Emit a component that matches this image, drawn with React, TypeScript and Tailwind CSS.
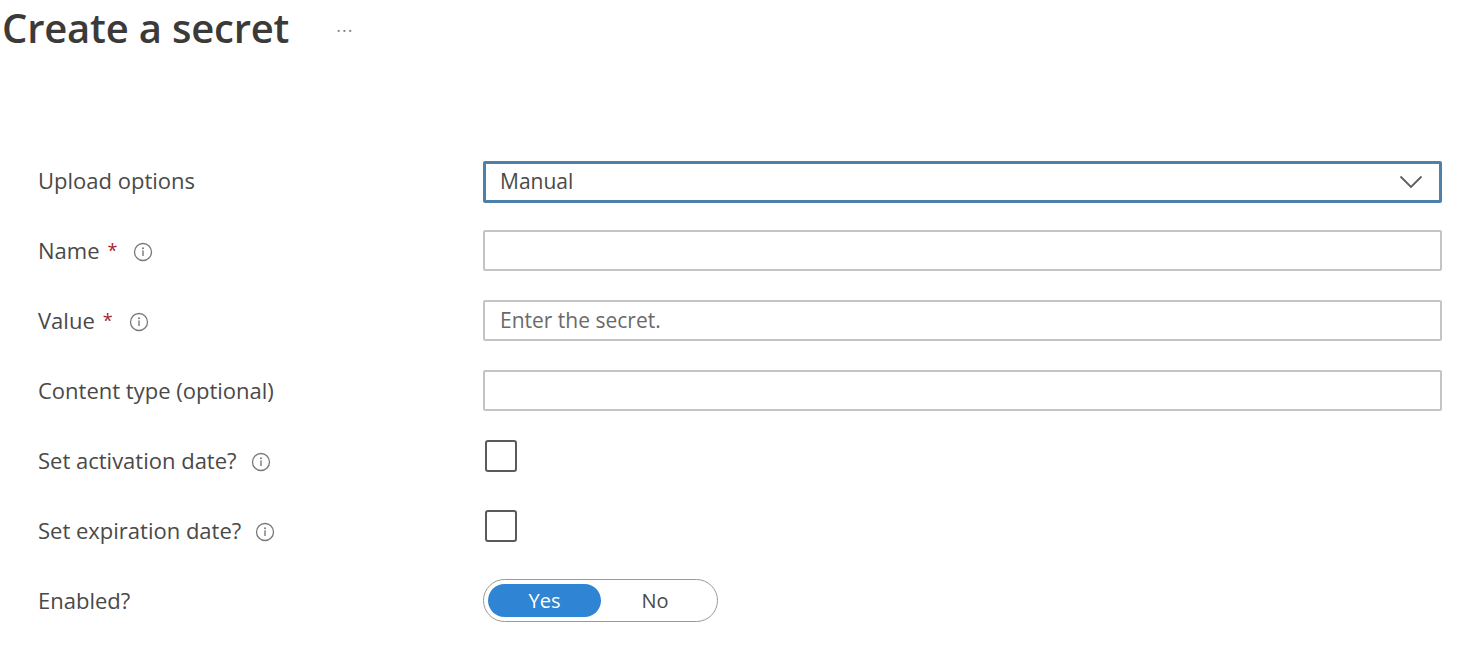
import React from "react";

const font = { fontFamily: '"Open Sans", "Noto Sans", sans-serif' };

const InfoIcon = () => (
    <svg width="20" height="20" viewBox="0 0 20 20" className="shrink-0">
        <circle cx="10" cy="10" r="8.5" fill="none" stroke="#7a7978" strokeWidth="1.3" />
        <circle cx="10" cy="6.3" r="1" fill="#7a7978" />
        <rect x="9.3" y="8.4" width="1.4" height="5.6" fill="#7a7978" />
    </svg>
);

const Label = ({ text, required, info }: { text: string; required?: boolean; info?: boolean }) => (
    <div className="w-[445px] shrink-0 mb-[3px] flex items-center text-[22px] text-[#4a4948]">
        <span>{text}</span>
        {required && <span className="ml-[8px] text-[#a4262c] text-[18px]">*</span>}
        {info && (
            <span className={required ? "ml-[16px] mt-[2px]" : "ml-[14px] mt-[2px]"}>
                <InfoIcon />
            </span>
        )}
    </div>
);

const TextBox = ({ placeholder }: { placeholder?: string }) => (
    <div className="flex-1 h-[41px] mb-[3px] border-2 border-[#c4c4c4] rounded-[2px] flex items-center px-[15px] text-[21px] text-[#6b6a69]">
        {placeholder}
    </div>
);

const Checkbox = () => (
    <div className="w-[32px] h-[32px] border-2 border-[#5a5a5a] rounded-[3px] mb-[12px]" />
);

const App = () => {
    return (
        <div className="w-[1476px] h-[662px] bg-white overflow-hidden" style={font}>
            <div className="h-[56px] flex items-center pl-[2px]">
                <h1 className="text-[40px] font-semibold text-[#3b3a39] tracking-[-0.2px]">Create a secret</h1>
                <span className="ml-[47px] mt-[4px] text-[18px] text-[#8a8886] tracking-[1px]">···</span>
            </div>

            <div className="mt-[91px] pl-[38px] pr-[34px]">
                <div className="h-[70px] flex items-center">
                    <Label text="Upload options" />
                    <div className="flex-1 h-[42px] border-[3px] border-[#4e80aa] rounded-[2px] flex items-center justify-between pl-[14px] pr-[16px] text-[21px] text-[#4a4948]">
                        <span>Manual</span>
                        <svg width="24" height="14" viewBox="0 0 24 14">
                            <path d="M1.5 1.5 L12 12 L22.5 1.5" fill="none" stroke="#5f5e5d" strokeWidth="1.8" />
                        </svg>
                    </div>
                </div>
                <div className="h-[70px] flex items-center">
                    <Label text="Name" required info />
                    <TextBox />
                </div>
                <div className="h-[70px] flex items-center">
                    <Label text="Value" required info />
                    <TextBox placeholder="Enter the secret." />
                </div>
                <div className="h-[70px] flex items-center">
                    <Label text="Content type (optional)" />
                    <TextBox />
                </div>
                <div className="h-[70px] flex items-center">
                    <Label text="Set activation date?" info />
                    <div className="pl-[2px]">
                        <Checkbox />
                    </div>
                </div>
                <div className="h-[70px] flex items-center">
                    <Label text="Set expiration date?" info />
                    <div className="pl-[2px]">
                        <Checkbox />
                    </div>
                </div>
                <div className="h-[70px] flex items-center">
                    <Label text="Enabled?" />
                    <div className="w-[235px] h-[43px] mb-[3px] rounded-full border-[1.5px] border-[#9a9998] flex items-center p-[4px]">
                        <div className="w-[113px] h-[33px] rounded-full bg-[#2f84d4] flex items-center justify-center text-[20px] text-white">
                            Yes
                        </div>
                        <div className="flex-1 flex items-center justify-center text-[20px] text-[#4a4948] pr-[4px]">
                            No
                        </div>
                    </div>
                </div>
            </div>
        </div>
    );
};

export default App;
